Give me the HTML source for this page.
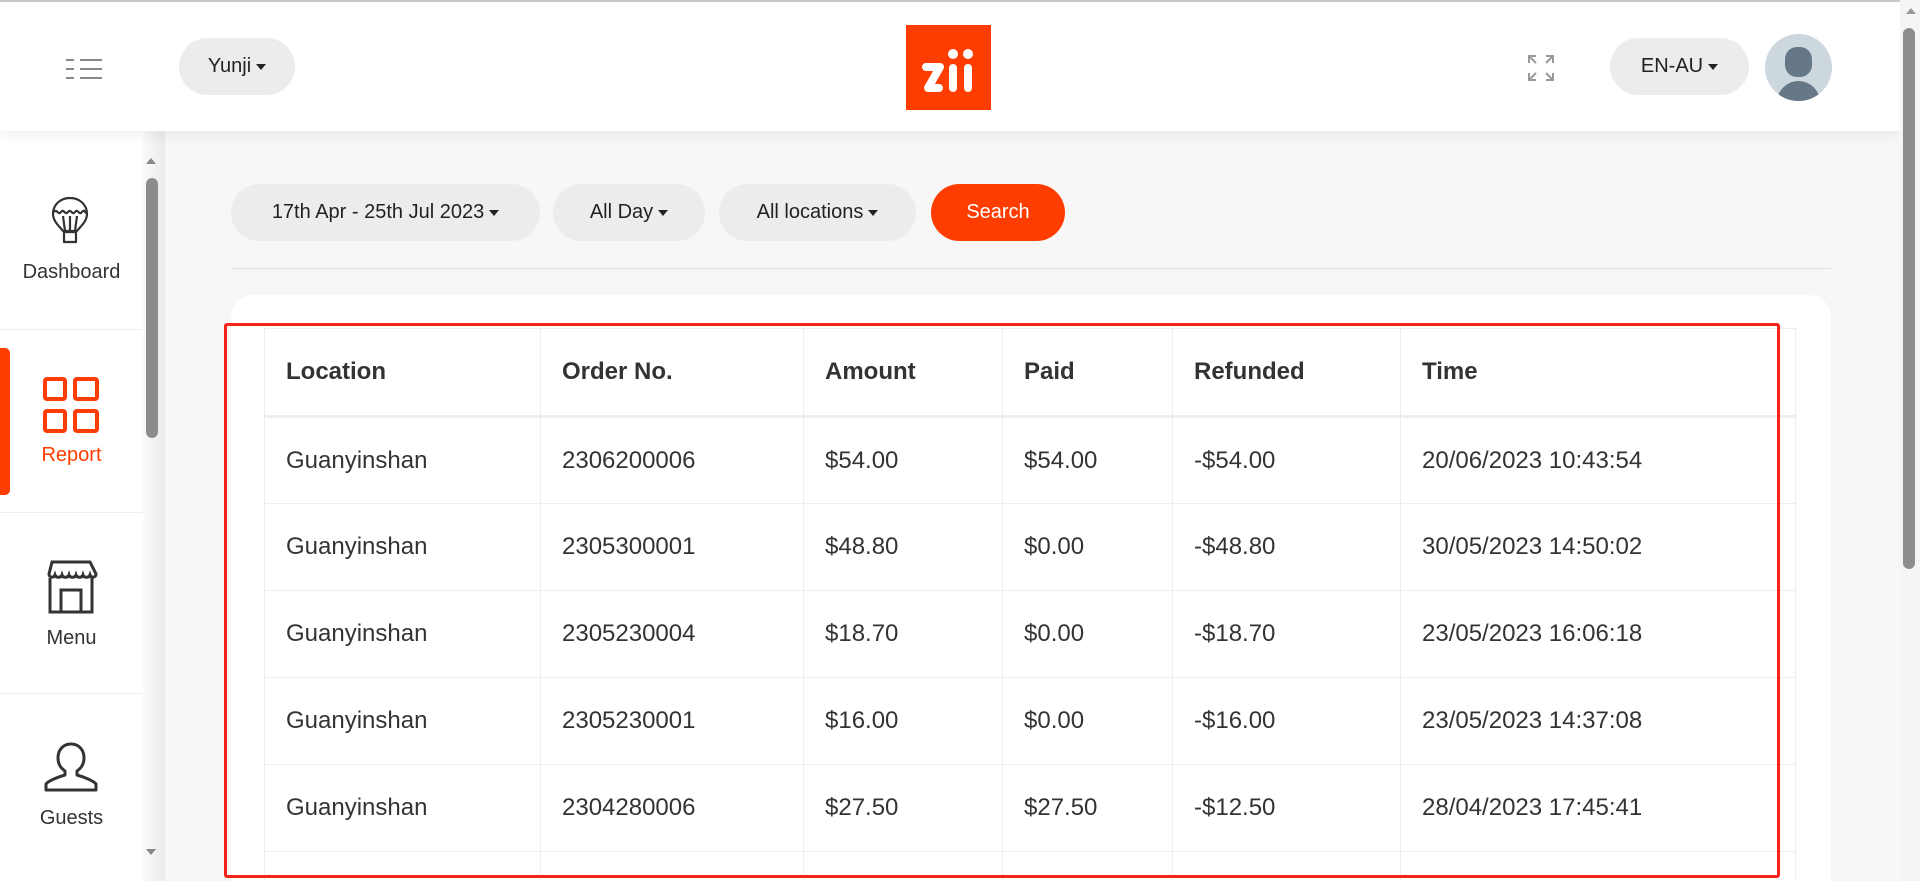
<!DOCTYPE html>
<html><head><meta charset="utf-8"><style>
*{box-sizing:border-box;margin:0;padding:0}
html,body{width:1920px;height:881px;overflow:hidden}
body{background:#f7f7f7;font-family:"Liberation Sans",Arial,sans-serif;color:#333;position:relative}
#wrap{position:absolute;left:0;top:0;width:1920px;height:881px;overflow:hidden}
.hdr{position:absolute;left:0;top:0;width:1900px;height:131px;background:#fff;border-top:2px solid #c8c8c8;box-shadow:0 4px 14px rgba(0,0,0,.06);z-index:3}
.pill{position:absolute;background:#ececec;border-radius:30px;font-size:20px;color:#222;display:flex;align-items:center;justify-content:center}
.car{display:inline-block;width:0;height:0;border-left:5px solid transparent;border-right:5px solid transparent;border-top:6px solid #222;margin-left:5px;vertical-align:middle}
.side{position:absolute;left:0;top:131px;width:143px;height:750px;background:#fff}
.sb{position:absolute;left:143px;top:131px;width:22px;height:750px;background:linear-gradient(90deg,#fafafa,#f0f0f0 60%,#ebebeb)}
.item{position:absolute;left:0;width:143px;text-align:center;font-size:20px;color:#333}
.div{position:absolute;left:0;width:143px;height:1px;background:#eee}
.filt{position:absolute;top:184px;height:57px}
.tw{position:absolute;left:264px;top:328px;width:1532px;height:553px;overflow:hidden}
table{border-collapse:collapse;width:1532px;font-size:24px;color:#333;table-layout:fixed}
td,th{border:1px solid #eee;text-align:left;padding-left:21px;height:87px;font-weight:normal}
th{font-weight:bold;height:88px;border-bottom:3px solid #eee}
</style></head><body><div id="wrap">
<div class="hdr">
  <svg style="position:absolute;left:66px;top:56px" width="36" height="22" viewBox="0 0 36 22"><g stroke="#888" stroke-width="2"><line x1="0" y1="2" x2="8" y2="2"/><line x1="14" y1="2" x2="36" y2="2"/><line x1="0" y1="11" x2="8" y2="11"/><line x1="14" y1="11" x2="36" y2="11"/><line x1="0" y1="20" x2="8" y2="20"/><line x1="14" y1="20" x2="36" y2="20"/></g></svg>
  <div class="pill" style="left:179px;top:36px;width:116px;height:57px">Yunji<span class="car"></span></div>
  <svg style="position:absolute;left:906px;top:23px" width="85" height="85" viewBox="0 0 85 85"><rect width="85" height="85" fill="#ff3d00"/><g stroke="#fff" stroke-width="8" stroke-linecap="round" stroke-linejoin="round" fill="none"><path d="M20 42 H34 L22 63 H33"/><line x1="47" y1="43" x2="47" y2="63"/><line x1="62" y1="43" x2="62" y2="63"/></g><circle cx="47" cy="29" r="5" fill="#fff"/><circle cx="62" cy="29" r="5" fill="#fff"/></svg>
  <svg style="position:absolute;left:1527px;top:52px" width="28" height="28" viewBox="0 0 28 28"><g stroke="#999" stroke-width="2" fill="none"><path d="M2 9V2h7M2 2l7 7"/><path d="M19 2h7v7M26 2l-7 7"/><path d="M2 19v7h7M2 26l7-7"/><path d="M26 19v7h-7M26 26l-7-7"/></g></svg>
  <div class="pill" style="left:1610px;top:36px;width:139px;height:57px">EN-AU<span class="car"></span></div>
  <svg style="position:absolute;left:1765px;top:32px" width="67" height="67" viewBox="0 0 67 67"><clipPath id="c"><circle cx="33.5" cy="33.5" r="33.5"/></clipPath><circle cx="33.5" cy="33.5" r="33.5" fill="#cdd7de"/><g clip-path="url(#c)" fill="#667788"><rect x="20" y="13" width="27" height="30" rx="12"/><ellipse cx="33.5" cy="70" rx="22" ry="23"/></g></svg>
</div>
<div style="position:absolute;left:1900px;top:0;width:20px;height:881px;background:#f5f5f5;z-index:4"><div style="position:absolute;left:6px;top:8px;border-left:5px solid transparent;border-right:5px solid transparent;border-bottom:6px solid #999"></div><div style="position:absolute;left:3px;top:28px;width:12px;height:541px;background:#8c8c8c;border-radius:6px"></div></div>
<div class="side">
  <svg style="position:absolute;left:51px;top:65px" width="38" height="54" viewBox="0 0 38 54"><g stroke="#333" stroke-width="2.2" fill="none" stroke-linejoin="round"><path d="M19 2C9 2 2 9 2 18c0 7 6 12 10 17h14c4-5 10-10 10-17C36 9 29 2 19 2z"/><path d="M3 16c3-4 4 4 7 0s4 4 7 0 4 4 7 0 4 4 7 0 3 3 5 0"/><path d="M12 20l2 15M26 20l-2 15M19 20v15"/><rect x="13" y="36" width="12" height="10"/></g></svg>
  <div class="item" style="top:130px">Dashboard</div>
  <div class="div" style="top:198px"></div>
  <div style="position:absolute;left:0;top:217px;width:10px;height:147px;background:#ff3d00;border-radius:0 5px 5px 0"></div>
  <svg style="position:absolute;left:43px;top:246px" width="56" height="56" viewBox="0 0 56 56"><g stroke="#ff3d00" stroke-width="4" fill="none"><rect x="2" y="2" width="20" height="20" rx="2"/><rect x="32" y="2" width="22" height="20" rx="2"/><rect x="2" y="34" width="20" height="20" rx="2"/><rect x="32" y="34" width="22" height="20" rx="2"/></g></svg>
  <div class="item" style="top:313px;color:#ff3d00">Report</div>
  <div class="div" style="top:381px"></div>
  <svg style="position:absolute;left:44px;top:429px" width="54" height="54" viewBox="0 0 54 54"><g stroke="#333" stroke-width="3" fill="none"><path d="M8 2h38l6 12c0 4-5 4-6 1-1 3-6 3-7 0-1 3-6 3-7 0-1 3-6 3-7 0-1 3-6 3-7 0-1 3-6 3-7 0-1 3-6 3-6-1z"/><path d="M6 18v34h42V18"/><rect x="17" y="30" width="20" height="22"/></g></svg>
  <div class="item" style="top:496px">Menu</div>
  <div class="div" style="top:562px"></div>
  <svg style="position:absolute;left:44px;top:610px" width="54" height="54" viewBox="0 0 54 54"><path d="M27 3c-8 0-13 6-13 14 0 7 4 11 7 13v4c-7 2-17 6-19 9v6h50v-6c-2-3-12-7-19-9v-4c3-2 7-6 7-13 0-8-5-14-13-14z" stroke="#333" stroke-width="3" fill="none" stroke-linejoin="round"/></svg>
  <div class="item" style="top:676px">Guests</div>
</div>
<div class="sb"><div style="position:absolute;left:3px;top:27px;border-left:5px solid transparent;border-right:5px solid transparent;border-bottom:6px solid #888"></div><div style="position:absolute;left:3px;top:47px;width:12px;height:260px;background:#8c8c8c;border-radius:6px"></div><div style="position:absolute;left:3px;top:718px;border-left:5px solid transparent;border-right:5px solid transparent;border-top:6px solid #888"></div></div>
<div class="pill filt" style="left:231px;width:309px">17th Apr - 25th Jul 2023<span class="car"></span></div>
<div class="pill filt" style="left:553px;width:152px">All Day<span class="car"></span></div>
<div class="pill filt" style="left:719px;width:197px">All locations<span class="car"></span></div>
<div class="pill filt" style="left:931px;width:134px;background:#ff3d00;color:#fff">Search</div>
<div style="position:absolute;left:231px;top:268px;width:1600px;height:1px;background:#ddd"></div>
<div style="position:absolute;left:231px;top:295px;width:1600px;height:586px;background:#fff;border-radius:22px 22px 0 0"></div>
<div class="tw"><table>
<colgroup><col style="width:276px"><col style="width:263px"><col style="width:199px"><col style="width:170px"><col style="width:228px"><col></colgroup>
<tr><th>Location</th><th>Order No.</th><th>Amount</th><th>Paid</th><th>Refunded</th><th>Time</th></tr>
<tr><td>Guanyinshan</td><td>2306200006</td><td>$54.00</td><td>$54.00</td><td>-$54.00</td><td>20/06/2023 10:43:54</td></tr>
<tr><td>Guanyinshan</td><td>2305300001</td><td>$48.80</td><td>$0.00</td><td>-$48.80</td><td>30/05/2023 14:50:02</td></tr>
<tr><td>Guanyinshan</td><td>2305230004</td><td>$18.70</td><td>$0.00</td><td>-$18.70</td><td>23/05/2023 16:06:18</td></tr>
<tr><td>Guanyinshan</td><td>2305230001</td><td>$16.00</td><td>$0.00</td><td>-$16.00</td><td>23/05/2023 14:37:08</td></tr>
<tr><td>Guanyinshan</td><td>2304280006</td><td>$27.50</td><td>$27.50</td><td>-$12.50</td><td>28/04/2023 17:45:41</td></tr>
<tr><td></td><td></td><td></td><td></td><td></td><td></td></tr>
</table></div>
<div style="position:absolute;left:224px;top:323px;width:1556px;height:555px;border:3px solid #f5231a;border-radius:3px"></div>
</div></body></html>
